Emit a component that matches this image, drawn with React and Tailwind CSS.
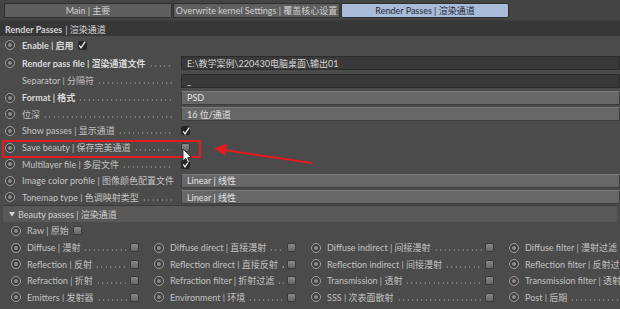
import React from 'react';

const FONT = "font-['Lato','Noto_Sans_CJK_SC',sans-serif]";

/* ─── small controls ───────────────────────────────────────────────── */
function Radio() {
  return (
    <span className="flex h-[10px] w-[10px] shrink-0 items-center justify-center rounded-full border border-[#a3a3a3] bg-[#3f3f3f]">
      <span className="h-[4px] w-[4px] rounded-full bg-[#8c8c8c]" />
    </span>
  );
}

function Check({ on }) {
  if (on) {
    return (
      <span className="flex h-[9px] w-[9px] shrink-0 items-center justify-center rounded-[2px] bg-[#262626]">
        <svg width="8" height="8" viewBox="0 0 8 8">
          <path d="M1.2 4.4 L3 6.8 L7.2 0.6" fill="none" stroke="#f2f2f2" strokeWidth="1.3" />
        </svg>
      </span>
    );
  }
  return (
    <span className="h-[9px] w-[9px] shrink-0 rounded-[2px] border border-[#3a3a3a] bg-gradient-to-b from-[#8a8a8a] to-[#666]" />
  );
}

// dotted leader drawn as a repeating dot pattern
function Dots() {
  return (
    <span className="mx-[3px] mt-[5px] h-[2px] min-w-0 flex-1 bg-[radial-gradient(circle,#8f8f8f_0.7px,transparent_1px)] bg-[length:4.5px_2px] bg-repeat-x" />
  );
}

function Field({ dark, children }) {
  return (
    <div
      className={`flex h-[14px] flex-1 items-center whitespace-nowrap border px-[5px] ${
        dark
          ? 'border-[#2c2c2c] bg-[#393939] text-[#d6d6d6]'
          : 'border-[#3d3d3d] border-t-[#7a7a7a] bg-[#676767] text-[#e2e2e2]'
      }`}
    >
      {children}
    </div>
  );
}

/* ─── top rows ─────────────────────────────────────────────────────── */
function Row({ h, radio = true, bold, label, dots = true, children, inline }) {
  return (
    <div className={`flex items-center ${h}`}>
      <div className="flex w-[181px] shrink-0 items-center overflow-hidden pl-[5px] pr-[6px]">
        <span className="flex w-[11px] shrink-0">{radio && <Radio />}</span>
        <span className={`ml-[6px] whitespace-nowrap ${bold ? 'font-bold text-[#dadada]' : 'text-[#c4c4c4]'}`}>
          {label}
        </span>
        {inline && <span className="ml-[4px]">{inline}</span>}
        {dots && <Dots />}
      </div>
      {children}
    </div>
  );
}

/* ─── beauty passes grid ───────────────────────────────────────────── */
const PASSES = [
  ['Diffuse | 漫射', 'Diffuse direct | 直接漫射', 'Diffuse indirect | 间接漫射', 'Diffuse filter | 漫射过滤'],
  ['Reflection | 反射', 'Reflection direct | 直接反射', 'Reflection indirect | 间接漫射', 'Reflection filter | 反射过滤'],
  ['Refraction | 折射', 'Refraction filter | 折射过滤', 'Transmission | 透射', 'Transmission filter | 透射过滤'],
  ['Emitters | 发射器', 'Environment | 环境', 'SSS | 次表面散射', 'Post | 后期'],
  ['Noise | 噪点', 'Shadow | 阴影', 'Irradiance | 辐照', 'Light direction | 灯光方向'],
];
const HEIGHTS = ['h-[17px]', 'h-[16px]', 'h-[17px]', 'h-[16px]', 'h-[17px]'];

function PassCell({ label }) {
  return (
    <div className="flex min-w-0 items-center overflow-hidden pr-[15px]">
      <Radio />
      <span className="ml-[6px] whitespace-nowrap text-[#c2c2c2]">{label}</span>
      <Dots />
      <Check />
    </div>
  );
}

export default function App() {
  return (
    <div className={`relative h-[309px] w-[620px] overflow-hidden bg-[#4b4b4b] text-[9px] leading-none ${FONT}`}>
      {/* tabs */}
      <div className="flex h-[22px] gap-[1px] border-b-[2px] border-[#3a3a3a] bg-[#444] pl-[4px] pt-[3px]">
        <div className="flex h-[15px] w-[168px] items-center justify-center whitespace-nowrap border border-[#2e2e2e] bg-[#5e5e5e] text-[#cfcfcf]">
          Main | 主要
        </div>
        <div className="flex h-[15px] w-[167px] items-center justify-center whitespace-nowrap border border-[#2e2e2e] bg-[#5e5e5e] text-[#cfcfcf]">
          Overwrite kernel Settings | 覆盖核心设置
        </div>
        <div className="flex h-[15px] w-[168px] items-center justify-center whitespace-nowrap rounded-[2px] border border-[#2e2e2e] bg-[#a9bcd9] text-[#1d2636]">
          Render Passes | 渲染通道
        </div>
      </div>

      {/* section header */}
      <div className="flex h-[14px] items-center bg-[#373737] pl-[5px] font-bold text-[#d4d4d4]">
        Render Passes <span className="ml-[3px] font-normal">| 渲染通道</span>
      </div>

      <Row h="h-[18px]" bold label="Enable | 启用" dots={false} inline={<Check on />} />
      <Row h="h-[18px]" bold label="Render pass file | 渲染通道文件">
        <Field dark>E:\教学案例\220430电脑桌面\输出01</Field>
      </Row>
      <Row h="h-[17px]" radio={false} label="Separator | 分隔符">
        <Field dark>_</Field>
      </Row>
      <Row h="h-[17px]" bold label="Format | 格式">
        <Field>PSD</Field>
      </Row>
      <Row h="h-[16px]" label="位深">
        <Field>16 位/通道</Field>
      </Row>
      <Row h="h-[17px]" label="Show passes | 显示通道">
        <Check on />
      </Row>
      <Row h="h-[17px]" label="Save beauty | 保存完美通道">
        <Check />
      </Row>
      <Row h="h-[16px]" label="Multilayer file | 多层文件">
        <Check on />
      </Row>
      <Row h="h-[17px]" label="Image color profile | 图像颜色配置文件">
        <Field>Linear | 线性</Field>
      </Row>
      <Row h="h-[16px]" label="Tonemap type | 色调映射类型">
        <Field>Linear | 线性</Field>
      </Row>

      {/* beauty passes */}
      <div className="mx-[3px] flex h-[17px] items-center gap-[3px] border-t border-[#3a3a3a] bg-[#585858] pl-[6px] text-[#cfcfcf]">
        <svg width="6" height="5" viewBox="0 0 6 5">
          <path d="M0 0 H6 L3 4.5 Z" fill="#d6d6d6" />
        </svg>
        Beauty passes | 渲染通道
      </div>

      <div className="pl-[11px]">
        <div className="flex h-[17px] items-center">
          <Radio />
          <span className="ml-[6px] mr-[4px] text-[#c2c2c2]">Raw | 原始</span>
          <Check />
        </div>
        {PASSES.map((row, i) => (
          <div key={i} className={`grid grid-cols-[143px_157px_198px_160px] items-center ${HEIGHTS[i]}`}>
            {row.map((p) => (
              <PassCell key={p} label={p} />
            ))}
          </div>
        ))}
      </div>

      {/* annotation overlay */}
      <div className="absolute left-[2px] top-[140px] h-[18px] w-[199px] border-2 border-[#e11d1d]" />
      <svg className="absolute left-0 top-0" width="620" height="309">
        <line x1="312" y1="163" x2="224" y2="150" stroke="#e51b1b" strokeWidth="2" />
        <path d="M214 148.5 L227 143.5 L225 155.5 Z" fill="#e51b1b" />
        {/* mouse cursor */}
        <path
          d="M183 149 L183 161 L185.8 158.4 L187.8 162.6 L189.6 161.8 L187.6 157.7 L191.3 157.4 Z"
          fill="#fafafa"
          stroke="#1a1a1a"
          strokeWidth="0.8"
        />
      </svg>
    </div>
  );
}
